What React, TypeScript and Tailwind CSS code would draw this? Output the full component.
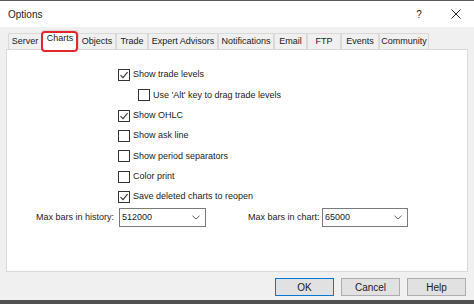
import type { ReactNode } from "react";

type Tab = { label: string; width: string; active?: boolean };

const tabs: Tab[] = [
  { label: "Server", width: "w-[34px]" },
  { label: "Charts", width: "w-[36px]", active: true },
  { label: "Objects", width: "w-[38px]" },
  { label: "Trade", width: "w-[32px]" },
  { label: "Expert Advisors", width: "w-[70px]" },
  { label: "Notifications", width: "w-[56px]" },
  { label: "Email", width: "w-[33px]" },
  { label: "FTP", width: "w-[34px]" },
  { label: "Events", width: "w-[38px]" },
  { label: "Community", width: "w-[50px]" },
];

const options = [
  { label: "Show trade levels", checked: true },
  { label: "Use 'Alt' key to drag trade levels", checked: false, indent: true },
  { label: "Show OHLC", checked: true },
  { label: "Show ask line", checked: false },
  { label: "Show period separators", checked: false },
  { label: "Color print", checked: false },
  { label: "Save deleted charts to reopen", checked: true },
];

function CheckBox({ checked }: { checked: boolean }) {
  return (
    <span className="flex h-[12px] w-[12px] shrink-0 items-center justify-center border border-[#333333] bg-white">
      {checked ? (
        <svg width="10" height="10" viewBox="0 0 10 10">
          <path d="M1.5 5.2 L4 7.6 L8.6 2.2" fill="none" stroke="#333333" strokeWidth="1.1" />
        </svg>
      ) : null}
    </span>
  );
}

function Combo({ value, width }: { value: string; width: string }) {
  return (
    <div className={`flex h-[19px] items-center justify-between border border-[#7a7a7a] bg-white pl-[2px] pr-[5px] ${width}`}>
      <span>{value}</span>
      <svg width="8" height="5" viewBox="0 0 8 5">
        <path d="M0.5 0.8 L4 4 L7.5 0.8" fill="none" stroke="#606060" strokeWidth="1" />
      </svg>
    </div>
  );
}

function Button({ children, primary }: { children: ReactNode; primary?: boolean }) {
  return (
    <div
      className={`flex h-[18px] w-[59px] items-center justify-center border bg-[#e1e1e1] text-[10px] ${
        primary ? "border-[#0078d7]" : "border-[#adadad]"
      }`}
    >
      {children}
    </div>
  );
}

export default function App() {
  return (
    <div
      className="flex h-[304px] w-[474px] flex-col overflow-hidden bg-[#f0f0f0] text-[9px] text-[#1a1a1a]"
      style={{ fontFamily: '"Liberation Sans", Arial, sans-serif' }}
    >
      <div className="h-px bg-[#5c5c5c]" />
      <div className="flex h-[26px] items-center justify-between bg-white pl-[8px]">
        <span className="text-[10px]">Options</span>
        <div className="flex h-full items-center">
          <span className="flex w-[38px] justify-center text-[10px]">?</span>
          <span className="flex w-[36px] justify-center">
            <svg width="10" height="10" viewBox="0 0 10 10">
              <path d="M0.5 0.5 L9.5 9.5 M9.5 0.5 L0.5 9.5" stroke="#222222" strokeWidth="1" />
            </svg>
          </span>
        </div>
      </div>

      <div className="px-[6px] pt-[4px]">
        <div className="flex h-[18px] items-end pl-[2px]">
          {tabs.map((tab) =>
            tab.active ? (
              <div
                key={tab.label}
                className={`relative z-10 -mb-px flex h-[20px] items-center justify-center border border-b-0 border-[#d9d9d9] bg-white pb-[3px] ${tab.width}`}
              >
                {tab.label}
                <div className="absolute -left-[2px] -right-[1px] top-[0px] -bottom-[2px] rounded-[4px] border-2 border-[#e3262b]" />
              </div>
            ) : (
              <div
                key={tab.label}
                className={`flex h-[16px] items-center justify-center border border-b-0 border-[#d9d9d9] bg-[#f0f0f0] ${tab.width}`}
              >
                {tab.label}
              </div>
            )
          )}
        </div>

        <div className="h-[223px] border border-[#d9d9d9] bg-white">
          <div className="flex flex-col pl-[111px] pt-[15px]">
            {options.map((opt) => (
              <div
                key={opt.label}
                className={`flex h-[20.3px] items-center gap-[3px] ${opt.indent ? "pl-[20px]" : ""}`}
              >
                <CheckBox checked={opt.checked} />
                <span>{opt.label}</span>
              </div>
            ))}
          </div>
          <div className="mt-[1px] flex items-center">
            <span className="w-[107px] text-right">Max bars in history:</span>
            <div className="ml-[5px]">
              <Combo value="512000" width="w-[87px]" />
            </div>
            <span className="ml-[42px] w-[72px]">Max bars in chart:</span>
            <div className="ml-[2px]">
              <Combo value="65000" width="w-[86px]" />
            </div>
          </div>
        </div>
      </div>

      <div className="mt-[6px] flex justify-end gap-[7px] pr-[8px]">
        <Button primary>OK</Button>
        <Button>Cancel</Button>
        <Button>Help</Button>
      </div>
      <div className="flex-1" />
      <div className="h-[4px] bg-[#4f4f4f]" />
    </div>
  );
}
